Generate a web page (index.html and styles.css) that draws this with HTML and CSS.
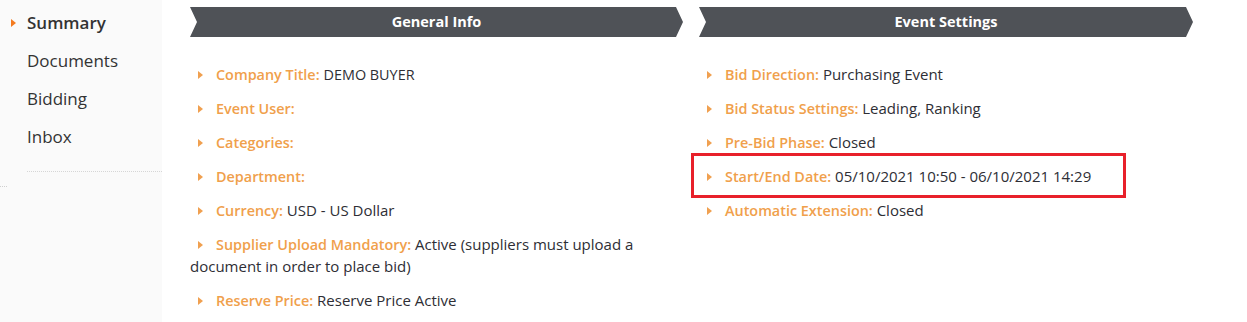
FILE: index.html
```html
<!DOCTYPE html>
<html>
<head>
<meta charset="utf-8">
<link rel="stylesheet" href="styles.css">
</head>
<body>
<div class="page">
  <aside class="sidebar">
    <ul class="nav">
      <li class="nav-item active">Summary</li>
      <li class="nav-item">Documents</li>
      <li class="nav-item">Bidding</li>
      <li class="nav-item">Inbox</li>
    </ul>
    <div class="nav-sep"></div>
    <div class="nav-stub"></div>
  </aside>
  <main class="main">
    <section class="col">
      <h2 class="banner">General Info</h2>
      <ul class="info">
        <li><span class="bullet"></span><span class="lbl">Company Title:</span> <span class="caps">DEMO BUYER</span></li>
        <li><span class="bullet"></span><span class="lbl">Event User:</span></li>
        <li><span class="bullet"></span><span class="lbl">Categories:</span></li>
        <li><span class="bullet"></span><span class="lbl">Department:</span></li>
        <li><span class="bullet"></span><span class="lbl">Currency:</span> USD - US Dollar</li>
        <li><span class="bullet"></span><span class="lbl">Supplier Upload Mandatory:</span> Active (suppliers must upload a document in order to place bid)</li>
        <li><span class="bullet"></span><span class="lbl">Reserve Price:</span> Reserve Price Active</li>
      </ul>
    </section>
    <section class="col">
      <h2 class="banner">Event Settings</h2>
      <ul class="info">
        <li><span class="bullet"></span><span class="lbl">Bid Direction:</span> Purchasing Event</li>
        <li><span class="bullet"></span><span class="lbl">Bid Status Settings:</span> Leading, Ranking</li>
        <li><span class="bullet"></span><span class="lbl">Pre-Bid Phase:</span> Closed</li>
        <li class="highlight"><span class="bullet"></span><span class="lbl">Start/End Date:</span> 05/10/2021 10:50 - 06/10/2021 14:29</li>
        <li><span class="bullet"></span><span class="lbl">Automatic Extension:</span> Closed</li>
      </ul>
    </section>
  </main>
</div>
</body>
</html>
```
FILE: styles.css
```css
html, body {
  margin: 0;
  padding: 0;
  background: #ffffff;
}
body {
  font-family: "Open Sans", "Liberation Sans", sans-serif;
  color: #333333;
}
.page {
  display: flex;
  height: 322px;
  overflow: hidden;
}
.sidebar {
  width: 162px;
  flex: none;
  background: #fafafa;
  padding-top: 4px;
  box-sizing: border-box;
}
.nav {
  list-style: none;
  margin: 0;
  padding: 0;
}
.nav-item {
  display: flex;
  align-items: center;
  font-size: 17px;
  line-height: 38px;
  color: #333333;
}
.nav-item::before {
  content: "";
  width: 0;
  height: 0;
  border-left: 5px solid transparent;
  border-top: 4.5px solid transparent;
  border-bottom: 4.5px solid transparent;
  margin-left: 11px;
  margin-right: 11px;
}
.nav-item.active {
  font-weight: 600;
}
.nav-item.active::before {
  border-left-color: #f47b20;
}
.nav-sep {
  margin: 15px 0 0 27px;
  border-top: 1px dotted #d6d6d6;
}
.nav-stub {
  margin-top: 14px;
  width: 7px;
  border-top: 1px dotted #d0d0d0;
}
.main {
  flex: 1;
  display: grid;
  grid-template-columns: 493px 494px;
  column-gap: 16px;
  align-items: start;
  padding: 7px 0 0 28px;
}
.banner {
  margin: 0;
  height: 30px;
  line-height: 29px;
  background: #4f5257;
  color: #ffffff;
  font-size: 14.5px;
  font-weight: 700;
  text-align: center;
  clip-path: polygon(0 0, calc(100% - 7px) 0, 100% 50%, calc(100% - 7px) 100%, 0 100%, 7px 50%);
}
.info {
  list-style: none;
  margin: 26px 0 0 0;
  padding: 0;
}
.info li {
  font-size: 15px;
  line-height: 22px;
  margin-bottom: 12px;
  color: #2e2e35;
}
.bullet {
  display: inline-block;
  width: 0;
  height: 0;
  border-left: 5px solid #f0a050;
  border-top: 4px solid transparent;
  border-bottom: 4px solid transparent;
  margin-left: 8px;
  margin-right: 13px;
  vertical-align: 1px;
}
.lbl {
  color: #f0a04b;
  font-size: 14.4px;
  line-height: 1;
  font-weight: 600;
}
.caps {
  font-size: 14.4px;
  line-height: 1;
}
.highlight {
  position: relative;
}
.highlight::after {
  content: "";
  position: absolute;
  top: -12px;
  left: -8px;
  width: 435px;
  height: 45px;
  box-sizing: border-box;
  border: 3px solid #e8202a;
}
```
